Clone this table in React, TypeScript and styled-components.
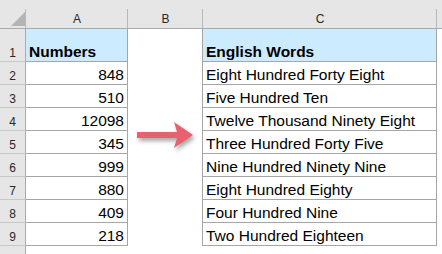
import React from 'react';
import styled, { createGlobalStyle } from 'styled-components';

const GlobalStyle = createGlobalStyle`
  html, body {
    margin: 0;
    padding: 0;
    background: #fff;
    overflow: hidden;
  }
  body {
    font-family: "Liberation Sans", Arial, sans-serif;
  }
`;

const rows: [number, string][] = [
  [848, 'Eight Hundred Forty Eight'],
  [510, 'Five Hundred Ten'],
  [12098, 'Twelve Thousand Ninety Eight'],
  [345, 'Three Hundred Forty Five'],
  [999, 'Nine Hundred Ninety Nine'],
  [880, 'Eight Hundred Eighty'],
  [409, 'Four Hundred Nine'],
  [218, 'Two Hundred Eighteen'],
];

const Sheet = styled.div`
  display: grid;
  grid-template-columns: 26px 102px 75px 234px 1fr;
  grid-template-rows: 29px 33px repeat(8, 23px) 23px;
  width: 442px;
  height: 254px;
  overflow: hidden;
`;

const HeaderCell = styled.div<{ $sep?: boolean }>`
  position: relative;
  box-sizing: border-box;
  background: #e6e6e6;
  border-bottom: 1px solid #ababab;
  display: flex;
  align-items: flex-end;
  justify-content: center;
  padding-bottom: 2px;
  font-size: 12px;
  line-height: 14px;
  color: #262626;

  &::after {
    content: '';
    display: ${(p) => (p.$sep ? 'block' : 'none')};
    position: absolute;
    right: 0;
    top: 9px;
    bottom: 0;
    width: 1px;
    background: #b8b8b8;
  }
`;

const CornerMark = styled.div`
  position: absolute;
  right: 1px;
  bottom: 2px;
  width: 0;
  height: 0;
  border-left: 14px solid transparent;
  border-bottom: 14px solid #b4b4b4;
`;

const RowHeader = styled.div`
  box-sizing: border-box;
  background: #e6e6e6;
  border-right: 1px solid #ababab;
  border-bottom: 1px solid #c8c8c8;
  display: flex;
  align-items: flex-end;
  justify-content: center;
  padding-bottom: 1px;
  font-size: 12px;
  line-height: 14px;
  color: #262626;
`;

const Cell = styled.div<{ $head?: boolean; $right?: boolean }>`
  box-sizing: border-box;
  background: ${(p) => (p.$head ? '#ccebff' : '#fff')};
  border-right: 1px solid #a6a6a6;
  border-bottom: 1px solid #a6a6a6;
  display: flex;
  align-items: flex-end;
  justify-content: ${(p) => (p.$right ? 'flex-end' : 'flex-start')};
  padding: 0 3px;
  font-size: 15.5px;
  line-height: 18px;
  font-weight: ${(p) => (p.$head ? 700 : 400)};
  color: #000;
  white-space: nowrap;
`;

const Gap = styled.div`
  grid-column: 3;
  grid-row: 2 / 11;
  border-right: 1px solid #a6a6a6;
  padding: 90px 0 0 7px;
`;

const Arrow = styled.svg`
  display: block;
  filter: drop-shadow(2px 3px 2px rgba(0, 0, 0, 0.35));
`;

const Blank = styled.div``;

const App: React.FC = () => (
  <>
    <GlobalStyle />
    <Sheet>
      <HeaderCell $sep>
        <CornerMark />
      </HeaderCell>
      <HeaderCell $sep>A</HeaderCell>
      <HeaderCell $sep>B</HeaderCell>
      <HeaderCell $sep>C</HeaderCell>
      <HeaderCell />

      <RowHeader>1</RowHeader>
      <Cell $head>Numbers</Cell>
      <Gap>
        <Arrow width="62" height="34" viewBox="0 0 62 34">
          <rect x="2" y="13" width="42" height="6" fill="#e9616f" />
          <polygon points="39,3 58,16 39,29 43,16" fill="#e9616f" />
        </Arrow>
      </Gap>
      <Cell $head>English Words</Cell>
      <Blank />

      {rows.map(([n, words], i) => (
        <React.Fragment key={n}>
          <RowHeader>{i + 2}</RowHeader>
          <Cell $right>{n}</Cell>
          <Cell>{words}</Cell>
          <Blank />
        </React.Fragment>
      ))}

      <RowHeader>10</RowHeader>
    </Sheet>
  </>
);

export default App;
